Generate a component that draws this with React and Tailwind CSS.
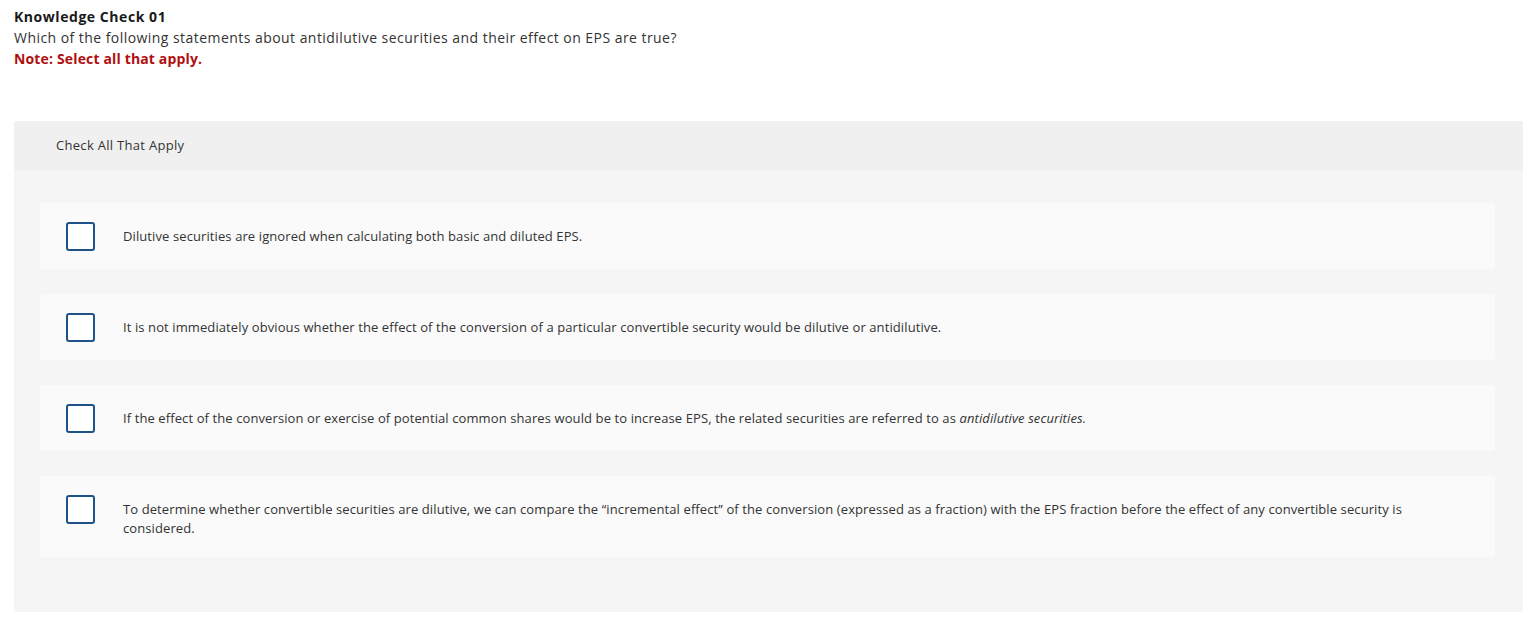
import React from 'react';

const OPTIONS = [
    { id: 1, text: 'Dilutive securities are ignored when calculating both basic and diluted EPS.' },
    { id: 2, text: 'It is not immediately obvious whether the effect of the conversion of a particular convertible security would be dilutive or antidilutive.' },
    {
        id: 3,
        text: (
            <>
                If the effect of the conversion or exercise of potential common shares would be to increase EPS, the related securities are referred to as <em>antidilutive securities.</em>
            </>
        ),
    },
    { id: 4, text: 'To determine whether convertible securities are dilutive, we can compare the \u201cincremental effect\u201d of the conversion (expressed as a fraction) with the EPS fraction before the effect of any convertible security is considered.' },
];

export default function App() {
    return (
        <div className="min-h-screen bg-white font-['Open_Sans',sans-serif] text-[#333]">
            {/* Question */}
            <div className="px-[14px] pt-[6px] text-[14px] leading-[21px]">
                <div className="font-bold tracking-[0.55px] text-[#1a1a1a]">Knowledge Check 01</div>
                <div className="tracking-[0.45px]">Which of the following statements about antidilutive securities and their effect on EPS are true?</div>
                <div className="font-bold tracking-[0.15px] text-[#b00f0f]">Note: Select all that apply.</div>
            </div>

            {/* Answer panel */}
            <div className="mx-[14px] mt-[52px] w-[1509px] overflow-hidden rounded-[3px] bg-[#f5f5f5]">
                <div className="flex h-[49px] items-center bg-[#f0f0f0] px-[42px] text-[13px] tracking-[0.3px] text-[#333]">
                    Check All That Apply
                </div>
                <div className="flex flex-col gap-[25px] pb-[55px] pl-[26px] pr-[28px] pt-[33px]">
                    {OPTIONS.map((opt) => (
                        <label key={opt.id} className="flex items-start gap-[28px] rounded-[3px] bg-[#fafafa] px-[26px] py-[18px] cursor-pointer">
                            <span className="flex h-[30px] shrink-0 items-center">
                                <span className="block h-[29px] w-[29px] rounded-[3px] border-2 border-[#1f5288] bg-white"></span>
                            </span>
                            <span className="pb-[1px] pr-[48px] pt-[6px] text-[13px] leading-[19px] tracking-[0.1px] text-[#333]">{opt.text}</span>
                        </label>
                    ))}
                </div>
            </div>
        </div>
    );
}
